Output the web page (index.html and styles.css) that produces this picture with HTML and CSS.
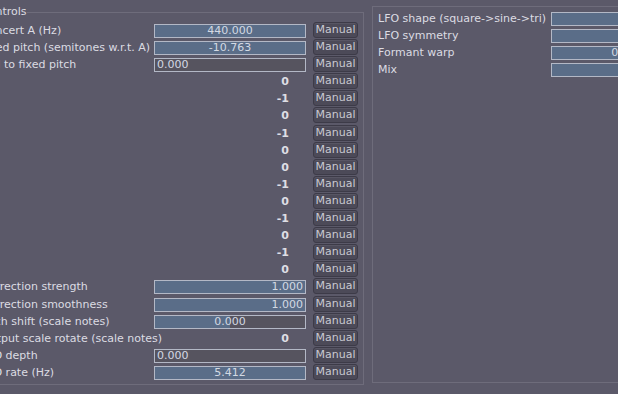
FILE: index.html
```html
<!DOCTYPE html>
<html>
<head>
<meta charset="utf-8">
<link rel="stylesheet" href="styles.css">
</head>
<body>
<div class="page">
  <fieldset class="group group-left">
    <legend class="group-title">Controls</legend>
    <div class="rows rows-left">
      <div class="label">Concert A (Hz)</div>
      <div class="field"><div class="fill" style="width:100%"></div><span class="val center">440.000</span></div>
      <button class="btn">Manual</button>

      <div class="label">Fixed pitch (semitones w.r.t. A)</div>
      <div class="field"><div class="fill" style="width:100%"></div><span class="val center">-10.763</span></div>
      <button class="btn">Manual</button>

      <div class="label">Pull to fixed pitch</div>
      <div class="field"><div class="fill" style="width:0%"></div><span class="val left">0.000</span></div>
      <button class="btn">Manual</button>

      <div class="label"></div><div class="int">0</div><button class="btn">Manual</button>
      <div class="label"></div><div class="int">-1</div><button class="btn">Manual</button>
      <div class="label"></div><div class="int">0</div><button class="btn">Manual</button>
      <div class="label"></div><div class="int">-1</div><button class="btn">Manual</button>
      <div class="label"></div><div class="int">0</div><button class="btn">Manual</button>
      <div class="label"></div><div class="int">0</div><button class="btn">Manual</button>
      <div class="label"></div><div class="int">-1</div><button class="btn">Manual</button>
      <div class="label"></div><div class="int">0</div><button class="btn">Manual</button>
      <div class="label"></div><div class="int">-1</div><button class="btn">Manual</button>
      <div class="label"></div><div class="int">0</div><button class="btn">Manual</button>
      <div class="label"></div><div class="int">-1</div><button class="btn">Manual</button>
      <div class="label"></div><div class="int">0</div><button class="btn">Manual</button>

      <div class="label">Correction strength</div>
      <div class="field"><div class="fill" style="width:100%"></div><span class="val right">1.000</span></div>
      <button class="btn">Manual</button>

      <div class="label">Correction smoothness</div>
      <div class="field"><div class="fill" style="width:100%"></div><span class="val right">1.000</span></div>
      <button class="btn">Manual</button>

      <div class="label">Pitch shift (scale notes)</div>
      <div class="field"><div class="fill" style="width:50%"></div><span class="val center">0.000</span></div>
      <button class="btn">Manual</button>

      <div class="label">Output scale rotate (scale notes)</div>
      <div class="int">0</div>
      <button class="btn">Manual</button>

      <div class="label">LFO depth</div>
      <div class="field"><div class="fill" style="width:0%"></div><span class="val left">0.000</span></div>
      <button class="btn">Manual</button>

      <div class="label">LFO rate (Hz)</div>
      <div class="field"><div class="fill" style="width:100%"></div><span class="val center">5.412</span></div>
      <button class="btn">Manual</button>
    </div>
  </fieldset>

  <fieldset class="group group-right">
    <div class="rows rows-right">
      <div class="label">LFO shape (square-&gt;sine-&gt;tri)</div>
      <div class="field"><div class="fill" style="width:100%"></div><span class="val right">1.000</span></div>

      <div class="label">LFO symmetry</div>
      <div class="field"><div class="fill" style="width:100%"></div><span class="val right">1.000</span></div>

      <div class="label">Formant warp</div>
      <div class="field"><div class="fill" style="width:100%"></div><span class="val center">0.000</span></div>

      <div class="label">Mix</div>
      <div class="field"><div class="fill" style="width:100%"></div><span class="val right">1.000</span></div>
    </div>
  </fieldset>
</div>
</body>
</html>
```

FILE: styles.css
```css
html, body {
  margin: 0;
  padding: 0;
  width: 618px;
  height: 394px;
  overflow: hidden;
  background: #5b5969;
}

.page {
  display: flex;
  align-items: stretch;
  height: 394px;
  box-sizing: border-box;
  padding: 5px 0 9px 0;
  gap: 8px;
  font-family: "DejaVu Sans", sans-serif;
  font-size: 11px;
  color: #dddde3;
}

.group {
  margin: 0;
  padding: 0;
  min-inline-size: 0;
  border: 1px solid #6e6c7b;
  box-sizing: border-box;
}

.group-left {
  flex: 0 0 392px;
  margin-left: -28px;
  padding: 3px 5px 3px 8px;
}

.group-title {
  padding: 0;
  margin-left: 0;
  line-height: 14px;
  color: #dcdce2;
}

.group-right {
  flex: 0 0 320px;
  margin: 1px 0 2px 0;
  padding: 3px 5px 4px 5px;
}

.rows {
  display: grid;
  align-items: start;
}

.rows-left {
  grid-template-columns: 166px 152px 45px;
  column-gap: 7px;
  grid-auto-rows: 17.1px;
}

.rows-right {
  grid-template-columns: 173px 152px;
  grid-auto-rows: 17px;
}

.label {
  margin-top: 2px;
  line-height: 14px;
  height: 14px;
  white-space: nowrap;
  overflow: visible;
  color: #dcdce3;
}

.field {
  margin-top: 2px;
  height: 14px;
  box-sizing: border-box;
  border: 1px solid #b3b8c6;
  background: #56545f;
  display: grid;
  grid-template-columns: 100%;
  grid-template-rows: 12px;
  overflow: hidden;
}

.fill {
  grid-area: 1 / 1;
  height: 12px;
  background: #5a6d88;
}

.val {
  grid-area: 1 / 1;
  line-height: 12px;
  padding: 0 2px;
  color: #d3d9e3;
  white-space: nowrap;
}

.val.center { text-align: center; }
.val.left { text-align: left; }
.val.right { text-align: right; }

.int {
  margin-top: 2px;
  line-height: 14px;
  text-align: right;
  padding-right: 17px;
  font-weight: bold;
  color: #dedee4;
}

.btn {
  height: 16px;
  width: 45px;
  margin: 0;
  padding: 0;
  box-sizing: border-box;
  border: 1px solid #3d3b48;
  border-radius: 3px;
  background: #4c4a58;
  box-shadow: inset 0 1px 0 #585664;
  color: #c9c9d1;
  font-family: "DejaVu Sans", sans-serif;
  font-size: 11px;
  line-height: 14px;
  text-align: center;
}
```
